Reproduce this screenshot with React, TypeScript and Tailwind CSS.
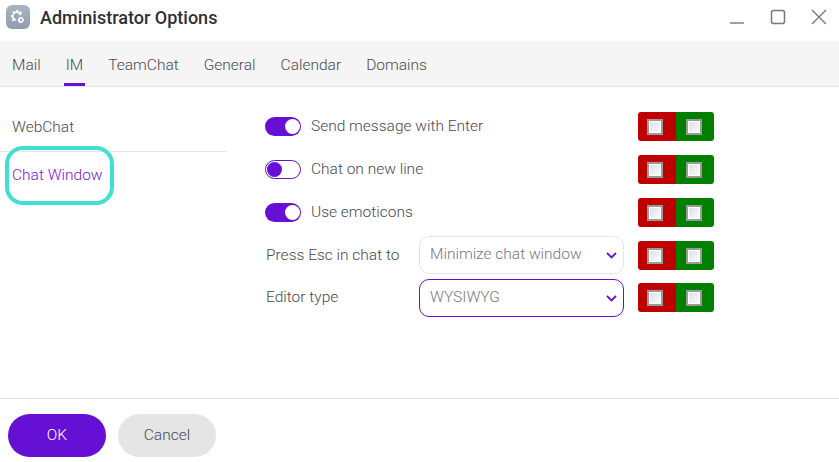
import React from "react";

const PURPLE = "bg-[#6610d6]";

function Toggle({ on }: { on: boolean }) {
  return on ? (
    <div className={`w-[36px] h-[19px] rounded-full ${PURPLE} flex items-center justify-end pr-[1px] shrink-0`}>
      <div className="w-[15px] h-[15px] rounded-full bg-white" />
    </div>
  ) : (
    <div className="w-[36px] h-[19px] rounded-full border border-[#6610d6] bg-white flex items-center pl-[1px] shrink-0">
      <div className={`w-[15px] h-[15px] rounded-full ${PURPLE}`} />
    </div>
  );
}

function Box() {
  return (
    <div className="w-[16px] h-[16px] border-2 border-[#9a9a9a] bg-white p-[1px]">
      <div className="w-full h-full bg-gradient-to-br from-[#dde2e7] to-[#fafafa]" />
    </div>
  );
}

function Pair({ last }: { last?: boolean }) {
  return (
    <div className={`flex w-[76px] h-[29px] rounded-[3px] overflow-hidden shrink-0 ml-auto ${last ? "mb-[2px]" : ""}`}>
      <div className="w-[38px] bg-[#bf0000] flex items-center pl-[9px] pt-[2px]"><Box /></div>
      <div className="w-[38px] bg-[#008000] flex items-center pl-[10px] pt-[2px]"><Box /></div>
    </div>
  );
}

function Chevron() {
  return (
    <svg width="11" height="7" viewBox="0 0 11 7" fill="none" stroke="#6610d6" strokeWidth="1.8" className="shrink-0">
      <path d="M1 1l4.5 4.5L10 1" />
    </svg>
  );
}

function Select({ value, active }: { value: string; active?: boolean }) {
  return (
    <div className={`w-[205px] h-[38px] rounded-[10px] border ${active ? "border-[#6610d6]" : "border-[#e6e6e6]"} flex items-center justify-between pl-[10px] pr-[6px] text-[#78787f] text-[15.5px]`}>
      <span>{value}</span>
      <Chevron />
    </div>
  );
}

function ToggleRow({ on, label }: { on: boolean; label: string }) {
  return (
    <div className="flex items-center h-[38px] w-[449px]">
      <Toggle on={on} />
      <span className="ml-[10px] pt-[2px] text-[#4a4a52] text-[15.5px]">{label}</span>
      <Pair />
    </div>
  );
}

function SelectRow({ label, value, active, last }: { label: string; value: string; active?: boolean; last?: boolean }) {
  return (
    <div className="flex items-center h-[38px] w-[449px]">
      <span className={`w-[154px] pl-[1px] text-[#4a4a52] text-[15.5px] shrink-0 ${last ? "" : "pt-[2px]"}`}>{label}</span>
      <Select value={value} active={active} />
      <Pair last={last} />
    </div>
  );
}

export default function App() {
  const tabs = ["Mail", "IM", "TeamChat", "General", "Calendar", "Domains"];
  return (
    <div className="w-[839px] h-[462px] bg-white flex flex-col overflow-hidden font-['Roboto',sans-serif] font-light">
      <header className="h-[41px] flex items-center pl-[6px] pb-[7px] shrink-0">
        <div className="w-[24px] h-[24px] rounded-[6px] bg-gradient-to-b from-[#a9b5c4] to-[#8f9cae] flex items-center justify-center">
          <svg width="16" height="16" viewBox="0 0 16 16" fill="#fff">
            <path fillRule="evenodd" d="M6 1h2l.3 1.6 1.1.5 1.4-.9 1.3 1.3-.9 1.4.3.8-2 .6a3 3 0 1 0-3.6 3.6l-.6 2-.8-.3-1.4.9-1.3-1.3.9-1.4-.5-1.1L1 8V6l1.6-.3.5-1.1-.9-1.4 1.3-1.3 1.4.9 1.1-.5z" />
            <path fillRule="evenodd" d="M11 7.5l.5 1 1.1-.2.4 1.1 1 .5-.3 1.1.3 1-1 .5-.4 1.1-1.1-.2-.5 1-.9-.7-1 .2-.4-1.1-1-.6.3-1-.3-1.1 1-.5.4-1.1 1 .2zm0 2.3a1.2 1.2 0 1 0 0 2.4 1.2 1.2 0 0 0 0-2.4z" />
          </svg>
        </div>
        <span className="ml-[10px] text-[18px] font-medium text-[#2f2f38]">Administrator Options</span>
        <div className="ml-auto flex items-center gap-[25px] pr-[12px]">
          <svg width="16" height="16" viewBox="0 0 16 16" stroke="#77777c" strokeWidth="1.4" fill="none"><path d="M2 14h14" /></svg>
          <svg width="17" height="16" viewBox="0 0 17 16" stroke="#77777c" strokeWidth="1.5" fill="none"><rect x="2.5" y="1.5" width="13" height="13" rx="2" /></svg>
          <svg width="16" height="16" viewBox="0 0 16 16" stroke="#77777c" strokeWidth="1.4" fill="none"><path d="M1 1l14 14M15 1L1 15" /></svg>
        </div>
      </header>

      <nav className="h-[46px] shrink-0 bg-[#f5f5f5] border-b border-[#e6e6e6] flex pl-[12px] gap-[25px] text-[15.5px] text-[#4a4a52]">
        {tabs.map((t) => (
          <div key={t} className={`flex items-center h-full ${t === "IM" ? "border-b-[3px] border-[#6610d6] pt-[7px] px-[2px] mx-[-2px]" : "pt-[4px]"}`}>
            {t}
          </div>
        ))}
      </nav>

      <main className="flex-1 flex min-h-0">
        <aside className="w-[227px] shrink-0 pt-[18px] text-[15.5px]">
          <div className="h-[47px] flex items-center pl-[12px] border-b border-[#e6e6e6] text-[#4a4a52]">WebChat</div>
          <div className="relative h-[46px] flex items-center pl-[12px] pt-[2px] text-[#7e14e0]">
            Chat Window
            <div className="absolute left-[5px] top-[-6px] w-[109px] h-[59px] rounded-[18px] border-[4px] border-[#3fe0d0]" />
          </div>
        </aside>
        <section className="pl-[38px] pt-[20px] flex flex-col gap-[5px]">
          <ToggleRow on label="Send message with Enter" />
          <ToggleRow on={false} label="Chat on new line" />
          <ToggleRow on label="Use emoticons" />
          <SelectRow label="Press Esc in chat to" value="Minimize chat window" />
          <SelectRow label="Editor type" value="WYSIWYG" active last />
        </section>
      </main>

      <footer className="h-[64px] shrink-0 border-t border-[#e6e6e6] flex pl-[8px] pt-[15px] gap-[12px] text-[15.5px]">
        <div className={`w-[98px] h-[43px] rounded-full ${PURPLE} text-white flex items-center justify-center`}>OK</div>
        <div className="w-[98px] h-[43px] rounded-full bg-[#e5e5e5] text-[#4a4a52] flex items-center justify-center">Cancel</div>
      </footer>
    </div>
  );
}
